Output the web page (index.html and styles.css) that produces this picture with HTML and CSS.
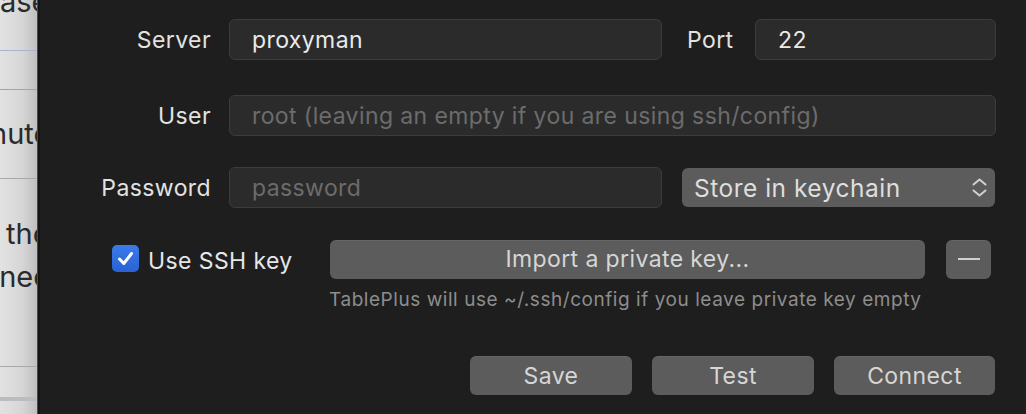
FILE: index.html
```html
<!DOCTYPE html>
<html>
<head>
<meta charset="utf-8">
<link rel="stylesheet" href="styles.css">
</head>
<body>
<div class="app">
  <aside class="side">
    <div class="s-row s-r1"><span class="s-txt s-ase">ase</span></div>
    <div class="s-row s-r2"></div>
    <div class="s-row s-r3"><span class="s-txt s-nute">nute</span></div>
    <div class="s-row s-r4"><span class="s-txt s-the">the</span><span class="s-txt s-nec">nnect</span></div>
    <div class="s-row s-r5"></div>
    <div class="s-row s-r6"></div>
  </aside>
  <div class="divider"></div>
  <main class="form">
    <div class="row r-server">
      <label class="lbl">Server</label>
      <div class="field f-half"><span class="val">proxyman</span></div>
      <label class="lbl-port">Port</label>
      <div class="field f-port"><span class="val">22</span></div>
    </div>
    <div class="row r-user">
      <label class="lbl">User</label>
      <div class="field f-full"><span class="ph">root (leaving an empty if you are using ssh/config)</span></div>
    </div>
    <div class="row r-pass">
      <label class="lbl">Password</label>
      <div class="field f-half"><span class="ph">password</span></div>
      <div class="popup">
        <span>Store in keychain</span>
        <svg class="chev" width="15" height="19" viewBox="0 0 15 19"><path d="M1.5 6.5 L7.5 1.5 L13.5 6.5 M1.5 12.5 L7.5 17.5 L13.5 12.5" fill="none" stroke="#d0d0d0" stroke-width="2" stroke-linecap="round" stroke-linejoin="round"/></svg>
      </div>
    </div>
    <div class="row r-ssh">
      <div class="check">
        <span class="box"><svg width="27" height="27" viewBox="0 0 27 27"><path d="M7.5 14 L11.8 18.5 L19.5 8.5" fill="none" stroke="#fff" stroke-width="3" stroke-linecap="round" stroke-linejoin="round"/></svg></span>
        <span class="check-lbl">Use SSH key</span>
      </div>
      <button class="btn b-import">Import a private key...</button>
      <button class="btn b-minus"><span class="minus"></span></button>
    </div>
    <p class="hint">TablePlus will use ~/.ssh/config if you leave private key empty</p>
    <div class="actions">
      <button class="btn b-act">Save</button>
      <button class="btn b-act">Test</button>
      <button class="btn b-act b-conn">Connect</button>
    </div>
  </main>
</div>
</body>
</html>
```

FILE: styles.css
```css
* { box-sizing: border-box; }
html, body { margin: 0; padding: 0; }
body {
  width: 1026px;
  height: 414px;
  overflow: hidden;
  background: #1e1e1e;
  font-family: "Inter", "Open Sans", sans-serif;
}
.app { display: flex; height: 414px; }

/* left panel */
.side {
  width: 37px;
  flex: none;
  overflow: hidden;
  background: linear-gradient(to right, #e2e2e2 0%, #d6d6d6 60%, #bfbfbf 100%);
  display: flex;
  flex-direction: column;
}
.s-row { position: relative; flex: none; }
.s-r1 { height: 51px; border-bottom: 1px solid #a9b5c8; }
.s-r2 { height: 39px; border-bottom: 1px solid #a5a5a5; }
.s-r3 { height: 89px; border-bottom: 1px solid #a8a8a8; }
.s-r4 { height: 188px; border-bottom: 1px solid #a8a8a8; }
.s-r5 { height: 34px; border-bottom: 4px solid #b9bdc2; }
.s-r6 { flex: 1; }
.s-txt {
  position: absolute;
  white-space: nowrap;
  font-size: 29px;
  line-height: 1;
  color: #2a2a2a;
}
.s-ase { left: 0; top: -13px; }
.s-nute { left: -10px; top: 29px; }
.s-the { left: 6px; top: 40px; }
.s-nec { left: -18px; top: 83px; }

.divider {
  width: 3px;
  flex: none;
  background: linear-gradient(to right, #4a4a4a 0, #4a4a4a 1px, #141414 1px);
}

/* form */
.form {
  flex: 1;
  display: flex;
  flex-direction: column;
  color: #e2e2e2;
  font-size: 23px;
  letter-spacing: 0.4px;
}
.row { display: flex; align-items: center; }
.lbl {
  width: 171px;
  text-align: right;
  margin-right: 18px;
  flex: none;
}
.r-server { margin-top: 19px; height: 41px; }
.r-user { margin-top: 35px; height: 41px; }
.r-pass { margin-top: 31px; height: 41px; }
.r-ssh { margin-top: 31px; height: 40px; }

.field {
  height: 41px;
  flex: none;
  background: #2b2b2b;
  border: 1px solid #3c3c3c;
  border-radius: 6px;
  padding-left: 22px;
  display: flex;
  align-items: center;
}
.f-half { width: 433px; }
.f-full { width: 767px; }
.f-port { width: 241px; margin-left: 22px; }
.val { color: #eaeaea; }
.ph { color: #6c6c6c; }
.lbl-port { margin-left: 25px; width: 46px; }

.popup {
  margin-left: 20px;
  width: 313px;
  height: 39px;
  background: #5c5c5c;
  border-radius: 6px;
  display: flex;
  align-items: center;
  justify-content: space-between;
  padding: 0 8px 0 12px;
  color: #dedede;
  font-size: 24.5px;
  letter-spacing: 0.5px;
}
.chev { display: block; }

.check {
  display: flex;
  align-items: center;
  margin-left: 72px;
  width: 218px;
  flex: none;
}
.box {
  width: 27px;
  height: 27px;
  border-radius: 5px;
  background: linear-gradient(#3a7bea, #2a62d2);
  display: block;
  flex: none;
  margin-bottom: 2px;
}
.box svg { display: block; }
.check-lbl { margin-left: 9px; color: #e6e6e6; padding-top: 4px; }

.btn {
  font-family: inherit;
  letter-spacing: inherit;
  border: none;
  background: #5c5c5c;
  color: #d6d6d6;
  border-radius: 6px;
  height: 39px;
  font-size: 23px;
  padding: 0;
  flex: none;
  box-shadow: inset 0 1px 0 rgba(255,255,255,0.06);
}
.b-import { width: 595px; }
.b-minus {
  width: 45px;
  margin-left: 21px;
  display: flex;
  align-items: center;
  justify-content: center;
}
.minus { display: block; width: 22px; height: 2px; background: #d0d0d0; }

.hint {
  margin: 10px 0 0 289px;
  font-size: 19px;
  letter-spacing: 0.55px;
  color: #8d8d8d;
  line-height: 22px;
}
.actions {
  display: flex;
  margin-top: 45px;
  margin-left: 430px;
  gap: 20px;
}
.b-act { width: 162px; }
.b-conn { width: 161px; }
```
